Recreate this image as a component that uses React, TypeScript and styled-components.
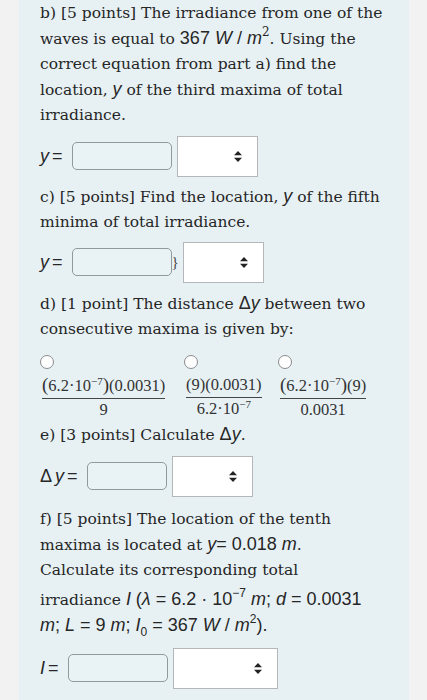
import styled, { createGlobalStyle } from 'styled-components';

const GlobalStyle = createGlobalStyle`
  html, body {
    margin: 0;
    padding: 0;
    background: #f2f2f2;
  }
`;

const Panel = styled.div`
  margin-left: 19px;
  width: 390px;
  min-height: 700px;
  box-sizing: border-box;
  padding: 1px 0 0 21px;
  background: #e7f1f4;
  color: #262626;
  font-family: 'DejaVu Serif', serif;
  font-size: 15.5px;
`;

const Question = styled.p<{ $top: number }>`
  margin: ${(p) => p.$top}px 0 0;
  line-height: 25px;
  white-space: nowrap;
`;

const RaisedLine = styled.span`
  display: inline-block;
  margin-top: 4px;
`;

const M = styled.span<{ $i?: boolean }>`
  font-family: 'Liberation Sans', Arial, sans-serif;
  font-size: 18px;
  font-style: ${(p) => (p.$i ? 'italic' : 'normal')};
`;

const Sup = styled.sup`
  font-size: 12px;
  line-height: 0;
  vertical-align: 8px;
`;

const Sub = styled.sub`
  font-size: 12px;
  line-height: 0;
  vertical-align: -5px;
`;

const AnswerRow = styled.div<{ $top: number }>`
  display: flex;
  align-items: center;
  height: 40px;
  margin-top: ${(p) => p.$top}px;
  font-family: 'Liberation Sans', Arial, sans-serif;
  font-size: 18px;
`;

const Label = styled.span`
  margin-right: 6px;
  white-space: nowrap;
  letter-spacing: 3px;
`;

const TextField = styled.div<{ $w: number }>`
  width: ${(p) => p.$w}px;
  height: 28px;
  box-sizing: border-box;
  border: 1px solid #8f9a9e;
  border-radius: 5px;
  background: #e9f3f6;
`;

const Brace = styled.span`
  width: 11px;
  font-family: 'Liberation Serif', serif;
  font-size: 15px;
  color: #444;
`;

const Dropdown = styled.div<{ $w: number; $gap: number }>`
  width: ${(p) => p.$w}px;
  height: 41px;
  margin-left: ${(p) => p.$gap}px;
  box-sizing: border-box;
  border: 1.5px solid #b3b7b9;
  background: #fff;
  display: flex;
  align-items: center;
  justify-content: flex-end;
  padding-right: 15px;
`;

const Choices = styled.div`
  display: flex;
  margin-top: 13px;
  font-family: 'Liberation Serif', 'Times New Roman', serif;
  font-size: 16.5px;
  color: #333;
`;

const Choice = styled.div<{ $w: number }>`
  width: ${(p) => p.$w}px;
  display: flex;
  flex-direction: column;
  align-items: flex-start;
`;

const Radio = styled.span`
  width: 14px;
  height: 14px;
  box-sizing: border-box;
  border: 1px solid #8a8a8a;
  border-radius: 50%;
  background: #fff;
`;

const Fraction = styled.span`
  display: inline-flex;
  flex-direction: column;
  align-items: center;
  margin: 4px 0 0 2px;
  line-height: 24px;
`;

const Denominator = styled.span`
  align-self: stretch;
  text-align: center;
  border-top: 1.5px solid #444;
  line-height: 20px;
  padding-top: 1px;
`;

const FSup = styled.sup`
  font-size: 11px;
  line-height: 0;
  vertical-align: 6px;
`;

const Paren = styled.span`
  font-size: 19px;
`;

const Arrows = () => (
  <svg width="8" height="11" viewBox="0 0 8 11">
    <path d="M4 0 L8 4.3 L0 4.3 Z M4 11 L8 6.7 L0 6.7 Z" fill="#222" />
  </svg>
);

const Answer = ({
  top,
  label,
  field,
  select,
  gap = 5,
  brace,
}: {
  top: number;
  label: React.ReactNode;
  field: number;
  select: number;
  gap?: number;
  brace?: boolean;
}) => (
  <AnswerRow $top={top}>
    <Label>{label}</Label>
    <TextField $w={field} />
    {brace && <Brace>{'}'}</Brace>}
    <Dropdown $w={select} $gap={brace ? 0 : gap}>
      <Arrows />
    </Dropdown>
  </AnswerRow>
);

const TenPow = () => (
  <>
    6.2·10<FSup>−7</FSup>
  </>
);

export default function App() {
  return (
    <>
      <GlobalStyle />
      <Panel>
        <Question $top={0}>
          b) [5 points] The irradiance from one of the
          <br />
          waves is equal to <M>367 </M>
          <M $i>W</M>
          <M> / </M>
          <M $i>m</M>
          <Sup>2</Sup>. Using the
          <br />
          correct equation from part a) find the
          <br />
          location, <M $i>y</M> of the third maxima of total
          <br />
          irradiance.
        </Question>
        <Answer top={8} label={<><i>y</i>=</>} field={100} select={81} />

        <Question $top={8}>
          c) [5 points] Find the location, <M $i>y</M> of the fifth
          <br />
          minima of total irradiance.
        </Question>
        <Answer top={7} label={<><i>y</i>=</>} field={100} select={81} brace />

        <Question $top={9}>
          d) [1 point] The distance <M>Δ</M>
          <M $i>y</M> between two
          <br />
          consecutive maxima is given by:
        </Question>
        <Choices>
          <Choice $w={144}>
            <Radio />
            <Fraction>
              <span>
                <Paren>(</Paren>
                <TenPow />
                <Paren>)</Paren>(0.0031)
              </span>
              <Denominator>9</Denominator>
            </Fraction>
          </Choice>
          <Choice $w={94}>
            <Radio />
            <Fraction>
              <span>(9)(0.0031)</span>
              <Denominator>
                <TenPow />
              </Denominator>
            </Fraction>
          </Choice>
          <Choice $w={100}>
            <Radio />
            <Fraction>
              <span>
                <Paren>(</Paren>
                <TenPow />
                <Paren>)</Paren>(9)
              </span>
              <Denominator>0.0031</Denominator>
            </Fraction>
          </Choice>
        </Choices>

        <Question $top={2}>
          e) [3 points] Calculate <M>Δ</M>
          <M $i>y</M>.
        </Question>
        <Answer top={8} label={<>Δ<i>y</i>=</>} field={80} select={81} />

        <Question $top={11}>
          f) [5 points] The location of the tenth
          <br />
          maxima is located at <M $i>y</M>
          <M>= 0.018 </M>
          <M $i>m</M>.
          <br />
          Calculate its corresponding total
          <br />
          <RaisedLine>
            irradiance <M $i>I</M>{' '}
            <M>
              (<i>λ</i> = 6.2 · 10<Sup>−7</Sup> <i>m</i>; <i>d</i> = 0.0031
            </M>
          </RaisedLine>
          <br />
          <M>
            <i>m</i>; <i>L</i> = 9 <i>m</i>; <i>I</i>
            <Sub>0</Sub> = 367 <i>W</i> / <i>m</i>
            <Sup>2</Sup>).
          </M>
        </Question>
        <Answer top={9} label={<><i>I</i>=</>} field={100} select={105} />
      </Panel>
    </>
  );
}
